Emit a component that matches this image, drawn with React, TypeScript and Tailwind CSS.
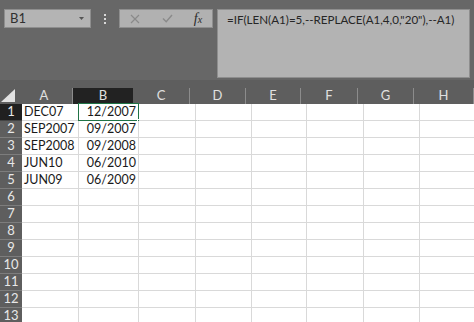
import React from "react";

const columns = [
  { name: "A", width: 57 },
  { name: "B", width: 60 },
  { name: "C", width: 57 },
  { name: "D", width: 56 },
  { name: "E", width: 55 },
  { name: "F", width: 57 },
  { name: "G", width: 56 },
  { name: "H", width: 60 },
];

const data: [string, string][] = [
  ["DEC07", "12/2007"],
  ["SEP2007", "09/2007"],
  ["SEP2008", "09/2008"],
  ["JUN10", "06/2010"],
  ["JUN09", "06/2009"],
];

const FORMULA = '=IF(LEN(A1)=5,--REPLACE(A1,4,0,"20"),--A1)';

function FormulaBar() {
  return (
    <div className="flex h-[80px] items-start bg-[#676767] pt-[9px]">
      {/* name box */}
      <div className="ml-[4px] flex h-[19px] w-[87px] items-center justify-between border border-[#8e8e8e] bg-[#b4b4b4] pl-[5px] pr-[6px]">
        <span className="text-[13px] leading-none text-[#303030]">B1</span>
        <svg width="5" height="3" viewBox="0 0 5 3">
          <path d="M0 0h5L2.5 3z" fill="#555" />
        </svg>
      </div>

      {/* grip dots */}
      <div className="flex h-[19px] w-[28px] flex-col items-center justify-center gap-[2px]">
        <span className="h-[2px] w-[2px] bg-[#d8d8d8]" />
        <span className="h-[2px] w-[2px] bg-[#d8d8d8]" />
        <span className="h-[2px] w-[2px] bg-[#d8d8d8]" />
      </div>

      {/* cancel / enter / fx */}
      <div className="flex h-[19px] w-[94px] items-center border border-[#8e8e8e] bg-[#b1b1b1]">
        <div className="flex w-[30px] justify-center">
          <svg width="10" height="10" viewBox="0 0 10 10">
            <path d="M1 1l8 8M9 1l-8 8" stroke="#8a8a8a" strokeWidth="1.2" />
          </svg>
        </div>
        <div className="flex w-[34px] justify-center">
          <svg width="11" height="9" viewBox="0 0 11 9">
            <path d="M1 4.5l3.2 3.2L10 1" stroke="#8a8a8a" strokeWidth="1.4" fill="none" />
          </svg>
        </div>
        <div className="flex w-[28px] justify-center">
          <span className="text-[14px] italic leading-none text-[#2a2a2a] [font-family:'Liberation_Serif',serif]">
            f<span className="text-[10px]">x</span>
          </span>
        </div>
      </div>

      {/* formula text */}
      <div className="ml-[4px] h-[69px] w-[253px] border border-[#8e8e8e] bg-[#b3b3b3] pl-[9px] pt-[2px]">
        <div className="whitespace-nowrap text-[11.6px] leading-[15px] text-[#262626]">{FORMULA}</div>
      </div>
    </div>
  );
}

function HeaderRow() {
  return (
    <div className="bg-[#5e5e5e] pt-[8px]">
      <div className="flex h-[16px]">
        <div className="relative w-[22px]">
          <svg className="absolute right-[1px] bottom-[2px]" width="14" height="13" viewBox="0 0 14 13">
            <path d="M14 0v13H0z" fill="#e2e2e2" />
          </svg>
        </div>
        {columns.map((c) => (
          <div
            key={c.name}
            style={{ width: c.width }}
            className={
              c.name === "B"
                ? "flex shrink-0 items-center justify-center bg-[#222222] text-[13px] text-[#e0e0e0]"
                : "flex shrink-0 items-center justify-center border-r border-[#8c8c8c] text-[13px] text-[#e0e0e0]"
            }
          >
            {c.name}
          </div>
        ))}
      </div>
    </div>
  );
}

function GridRow({ index }: { index: number }) {
  const values = data[index - 1];
  return (
    <div className="flex h-[17px]">
      <div
        className={
          index === 1
            ? "flex w-[22px] shrink-0 items-center justify-center border-b border-[#444] bg-[#202020] text-[13px] text-[#e8e8e8]"
            : "flex w-[22px] shrink-0 items-center justify-center border-b border-[#7d7d7d] bg-[#5e5e5e] text-[13px] text-[#e8e8e8]"
        }
      >
        {index}
      </div>
      {columns.map((c) => (
        <div
          key={c.name}
          style={{ width: c.width }}
          className={
            c.name === "B"
              ? "relative flex shrink-0 items-center justify-end border-r border-b border-[#d9d9d9] bg-white pr-[2px] text-[12.5px] text-[#1a1a1a]"
              : "relative flex shrink-0 items-center border-r border-b border-[#d9d9d9] bg-white pl-[2px] text-[12.5px] text-[#1a1a1a]"
          }
        >
          {values && c.name === "A" && <span>{values[0]}</span>}
          {values && c.name === "B" && <span>{values[1]}</span>}
          {index === 1 && c.name === "B" && (
            <>
              <div className="absolute -top-[1px] -left-[1px] -right-[1px] -bottom-[1px] border-[1.5px] border-[#217346]" />
              <div className="absolute -right-[3px] -bottom-[3px] h-[4px] w-[4px] border border-white bg-[#217346]" />
            </>
          )}
        </div>
      ))}
    </div>
  );
}

export default function App() {
  return (
    <div className="h-[322px] w-[474px] overflow-hidden bg-white [font-family:Lato,'Liberation_Sans',sans-serif]">
      <FormulaBar />
      <HeaderRow />
      {Array.from({ length: 13 }, (_, i) => (
        <GridRow key={i} index={i + 1} />
      ))}
    </div>
  );
}
